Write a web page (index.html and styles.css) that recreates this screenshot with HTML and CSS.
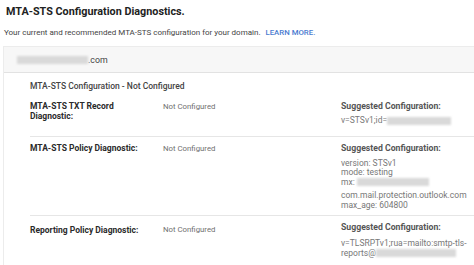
FILE: index.html
```html
<!DOCTYPE html>
<html>
<head>
<meta charset="utf-8">
<link rel="stylesheet" href="styles.css">
</head>
<body>
<div class="page">
  <h1 class="title">MTA-STS Configuration Diagnostics.</h1>
  <p class="sub">Your current and recommended MTA-STS configuration for your domain. <a class="learn">LEARN MORE.</a></p>
  <div class="card">
    <div class="card-head"><span class="blur w71"></span>.com</div>
    <div class="card-body">
      <div class="section">MTA-STS Configuration - Not Configured</div>
      <div class="row row1">
        <div class="label">MTA-STS TXT Record<br>Diagnostic:</div>
        <div class="value">Not Configured</div>
        <div class="sugg">
          <div class="sugg-title">Suggested Configuration:</div>
          <div class="sugg-text">v=STSv1;id=<span class="blur w64"></span></div>
        </div>
      </div>
      <div class="row row2">
        <div class="label">MTA-STS Policy Diagnostic:</div>
        <div class="value">Not Configured</div>
        <div class="sugg">
          <div class="sugg-title">Suggested Configuration:</div>
          <div class="sugg-text">
            <div>version: STSv1</div>
            <div>mode: testing</div>
            <div class="mx">mx: <span class="blur w72"></span></div>
            <div>com.mail.protection.outlook.com</div>
            <div>max_age: 604800</div>
          </div>
        </div>
      </div>
      <div class="row row3">
        <div class="label">Reporting Policy Diagnostic:</div>
        <div class="value">Not Configured</div>
        <div class="sugg">
          <div class="sugg-title">Suggested Configuration:</div>
          <div class="sugg-text">v=TLSRPTv1;rua=mailto:smtp-tls-<br>reports@<span class="blur w80"></span></div>
        </div>
      </div>
    </div>
  </div>
</div>
</body>
</html>
```
FILE: styles.css
```css
html, body {
  margin: 0;
  padding: 0;
  background: #ffffff;
  overflow: hidden;
}
body {
  font-family: Roboto, "Liberation Sans", sans-serif;
  color: #333;
}
.page {
  padding: 5px 0 0 4px;
  width: 520px;
}
.title {
  margin: 0 0 0 2px;
  font-size: 10.8px;
  font-weight: 700;
  color: #222;
  line-height: 13px;
}
.sub {
  margin: 10px 0 0 0;
  font-size: 8px;
  line-height: 10px;
  color: #444;
}
.learn {
  margin-left: 3px;
  color: #4a7bd0;
  font-weight: 500;
  font-size: 7.8px;
}
.card {
  margin: 8px 0 0 -1px;
  border: 1px solid #ececec;
  border-right: none;
}
.card-head {
  background: #f7f7f7;
  border-bottom: 1px solid #e2e2e2;
  height: 25px;
  display: flex;
  align-items: center;
  padding-left: 13px;
  font-size: 8.8px;
  color: #444;
}
.blur {
  display: inline-block;
  height: 8px;
  background: #d9d9d9;
  filter: blur(1.3px);
  vertical-align: middle;
}
.w64 { width: 64px; }
.w71 { width: 71px; }
.w72 { width: 72px; }
.w80 { width: 80px; }
.card-body {
  padding-left: 26px;
}
.section {
  font-size: 8.5px;
  color: #444;
  font-weight: 500;
  padding-top: 8px;
  line-height: 10px;
  margin-bottom: 4px;
}
.row {
  display: grid;
  grid-template-columns: 133px 178px 1fr;
  padding: 6px 0 10px;
  border-bottom: 1px solid #e6e6e6;
}
.row2 {
  padding-bottom: 5px;
}
.row3 {
  border-bottom: none;
}
.label {
  font-size: 8.5px;
  font-weight: 700;
  color: #2a2a2a;
  line-height: 10px;
}
.value {
  font-size: 7.8px;
  color: #707070;
  line-height: 10px;
  padding-top: 1px;
}
.sugg-title {
  font-size: 8.7px;
  font-weight: 700;
  color: #555;
  line-height: 10px;
  margin-bottom: 5px;
}
.row2 .sugg-title {
  margin-bottom: 6px;
}
.row3 .sugg-title {
  margin-bottom: 7px;
}
.sugg-text {
  font-size: 8.5px;
  color: #777;
  line-height: 9.5px;
}
.mx {
  padding-bottom: 4px;
}
.row3 .label,
.row3 .value {
  padding-top: 3px;
}
```
